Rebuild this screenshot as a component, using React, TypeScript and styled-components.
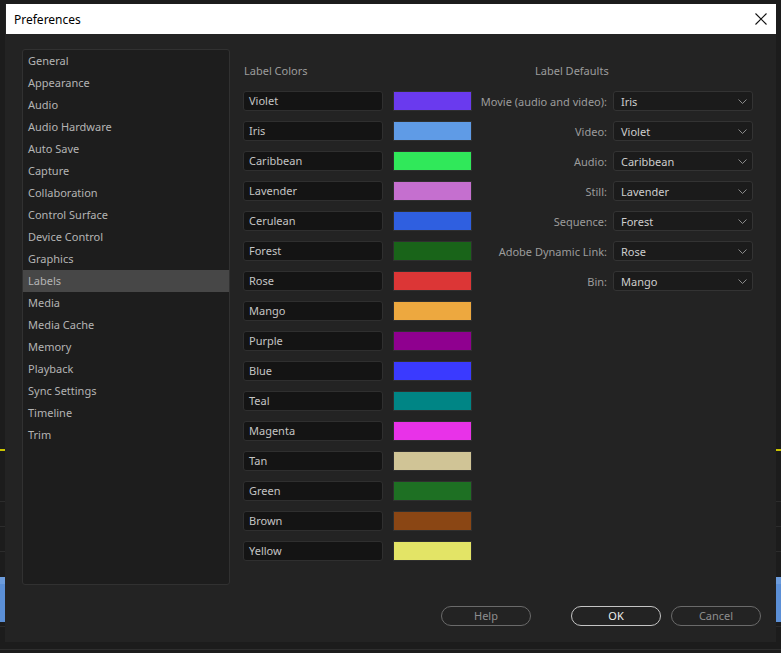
import React from 'react';
import styled, { createGlobalStyle } from 'styled-components';

const GlobalStyle = createGlobalStyle`
  html, body {
    margin: 0;
    padding: 0;
    background: #1c1c1c;
  }
  body {
    width: 781px;
    height: 653px;
    overflow: hidden;
    font-family: 'Noto Sans', 'Open Sans', sans-serif;
    font-size: 11px;
  }
`;

const navItems = [
  'General',
  'Appearance',
  'Audio',
  'Audio Hardware',
  'Auto Save',
  'Capture',
  'Collaboration',
  'Control Surface',
  'Device Control',
  'Graphics',
  'Labels',
  'Media',
  'Media Cache',
  'Memory',
  'Playback',
  'Sync Settings',
  'Timeline',
  'Trim',
];

const labelColors = [
  { name: 'Violet', color: '#6a3aee' },
  { name: 'Iris', color: '#5f9be6' },
  { name: 'Caribbean', color: '#30e85a' },
  { name: 'Lavender', color: '#c56fcf' },
  { name: 'Cerulean', color: '#2f5fe0' },
  { name: 'Forest', color: '#196419' },
  { name: 'Rose', color: '#dc3636' },
  { name: 'Mango', color: '#eda83f' },
  { name: 'Purple', color: '#8f008f' },
  { name: 'Blue', color: '#3a3aff' },
  { name: 'Teal', color: '#008585' },
  { name: 'Magenta', color: '#e832e8' },
  { name: 'Tan', color: '#d0c496' },
  { name: 'Green', color: '#1e7023' },
  { name: 'Brown', color: '#8a4614' },
  { name: 'Yellow', color: '#e3e466' },
];

const labelDefaults = [
  { label: 'Movie (audio and video):', value: 'Iris' },
  { label: 'Video:', value: 'Violet' },
  { label: 'Audio:', value: 'Caribbean' },
  { label: 'Still:', value: 'Lavender' },
  { label: 'Sequence:', value: 'Forest' },
  { label: 'Adobe Dynamic Link:', value: 'Rose' },
  { label: 'Bin:', value: 'Mango' },
];

/* the app behind the dialog: only the edges show */
const Backdrop = styled.div`
  position: relative;
  width: 781px;
  height: 653px;
  background: #1c1c1c;
`;

const TrackLine = styled.div<{ $top: number; $color?: string; $h?: number }>`
  position: absolute;
  left: 0;
  right: 0;
  top: ${(p) => p.$top}px;
  height: ${(p) => p.$h ?? 1}px;
  background: ${(p) => p.$color ?? '#2c2c2c'};
`;

const Clip = styled.div<{ $side: 'left' | 'right' }>`
  position: absolute;
  ${(p) => p.$side}: 0;
  top: 577px;
  width: 6px;
  height: 45px;
  background: #5b8fd6;
  border-top: 7px solid #6c9cdc;
  box-sizing: border-box;
`;

const Dialog = styled.div`
  position: absolute;
  left: 5px;
  top: 4px;
  width: 771px;
  height: 638px;
  background: #232323;
  display: flex;
  flex-direction: column;
  box-sizing: border-box;
  padding: 0 0 0 1px;
`;

const TitleBar = styled.div`
  height: 30px;
  background: #ffffff;
  display: flex;
  align-items: center;
  justify-content: space-between;
  padding: 0 0 0 8px;
  color: #000;
  font-size: 12px;
`;

const CloseButton = styled.div`
  width: 30px;
  height: 30px;
  display: flex;
  align-items: center;
  justify-content: center;
`;

const Body = styled.div`
  flex: 1;
  display: flex;
  flex-direction: column;
  padding: 15px 15px 16px 16px;
`;

const Main = styled.div`
  display: flex;
  gap: 13px;
`;

const Sidebar = styled.div`
  width: 208px;
  height: 536px;
  box-sizing: border-box;
  background: #1d1d1d;
  border: 1px solid #313131;
  border-radius: 3px;
  display: flex;
  flex-direction: column;
`;

const NavItem = styled.div<{ $active?: boolean }>`
  height: 22px;
  line-height: 22px;
  padding-left: 5px;
  color: #b4b4b4;
  background: ${(p) => (p.$active ? '#474747' : 'transparent')};
`;

const Content = styled.div`
  display: flex;
  padding-top: 12px;
`;

const ColorsColumn = styled.div`
  width: 230px;
  display: flex;
  flex-direction: column;
  gap: 10px;
`;

const Heading = styled.div<{ $indent?: number }>`
  height: 20px;
  line-height: 20px;
  color: #9c9c9c;
  padding-left: ${(p) => p.$indent ?? 1}px;
`;

const ColorRow = styled.div`
  display: flex;
  gap: 10px;
  height: 20px;
`;

const NameField = styled.div`
  width: 140px;
  box-sizing: border-box;
  background: #141414;
  border: 1px solid #2f2f2f;
  border-radius: 3px;
  color: #c4c4c4;
  line-height: 18px;
  padding-left: 5px;
`;

const Swatch = styled.div<{ $color: string }>`
  width: 79px;
  box-sizing: border-box;
  background: ${(p) => p.$color};
  border: 1px solid #2f2f2f;
`;

const DefaultsColumn = styled.div`
  display: flex;
  flex-direction: column;
  gap: 10px;
  margin-left: 5px;
`;

const DefaultRow = styled.div`
  display: flex;
  align-items: center;
  gap: 6px;
  height: 20px;
`;

const FieldLabel = styled.div`
  width: 129px;
  text-align: right;
  color: #9c9c9c;
  white-space: nowrap;
`;

const Select = styled.div`
  width: 140px;
  height: 20px;
  box-sizing: border-box;
  background: #1b1b1b;
  border: 1px solid #333;
  border-radius: 3px;
  display: flex;
  align-items: center;
  justify-content: space-between;
  padding: 0 5px 0 7px;
  color: #cdcdcd;
`;

const Footer = styled.div`
  margin-top: auto;
  display: flex;
  justify-content: flex-end;
  gap: 10px;
`;

const PillButton = styled.div<{ $primary?: boolean; $spaced?: boolean }>`
  width: 90px;
  height: 20px;
  box-sizing: border-box;
  border-radius: 10px;
  border: 1px solid ${(p) => (p.$primary ? '#c4c4c4' : '#6a6a6a')};
  color: ${(p) => (p.$primary ? '#f0f0f0' : '#8e8e8e')};
  text-align: center;
  line-height: 18px;
  margin-right: ${(p) => (p.$spaced ? 30 : 0)}px;
`;

const Chevron = () => (
  <svg width="9" height="5" viewBox="0 0 9 5">
    <path d="M0.5 0.5 L4.5 4.5 L8.5 0.5" fill="none" stroke="#8a8a8a" strokeWidth="1" />
  </svg>
);

const CloseIcon = () => (
  <svg width="12" height="12" viewBox="0 0 12 12">
    <path d="M0.5 0.5 L11.5 11.5 M11.5 0.5 L0.5 11.5" stroke="#111" strokeWidth="1.1" />
  </svg>
);

export default function App() {
  return (
    <>
      <GlobalStyle />
      <Backdrop>
        <TrackLine $top={449} $h={2} $color="#c9c400" />
        <TrackLine $top={501} />
        <TrackLine $top={526} />
        <TrackLine $top={551} />
        <TrackLine $top={626} />
        <TrackLine $top={649} $color="#2e2e2e" />
        <Clip $side="left" />
        <Clip $side="right" />
        <Dialog>
          <TitleBar>
            <span>Preferences</span>
            <CloseButton>
              <CloseIcon />
            </CloseButton>
          </TitleBar>
          <Body>
            <Main>
              <Sidebar>
                {navItems.map((item) => (
                  <NavItem key={item} $active={item === 'Labels'}>
                    {item}
                  </NavItem>
                ))}
              </Sidebar>
              <Content>
                <ColorsColumn>
                  <Heading>Label Colors</Heading>
                  {labelColors.map((c) => (
                    <ColorRow key={c.name}>
                      <NameField>{c.name}</NameField>
                      <Swatch $color={c.color} />
                    </ColorRow>
                  ))}
                </ColorsColumn>
                <DefaultsColumn>
                  <Heading $indent={57}>Label Defaults</Heading>
                  {labelDefaults.map((d) => (
                    <DefaultRow key={d.label}>
                      <FieldLabel>{d.label}</FieldLabel>
                      <Select>
                        <span>{d.value}</span>
                        <Chevron />
                      </Select>
                    </DefaultRow>
                  ))}
                </DefaultsColumn>
              </Content>
            </Main>
            <Footer>
              <PillButton $spaced>Help</PillButton>
              <PillButton $primary>OK</PillButton>
              <PillButton>Cancel</PillButton>
            </Footer>
          </Body>
        </Dialog>
      </Backdrop>
    </>
  );
}
